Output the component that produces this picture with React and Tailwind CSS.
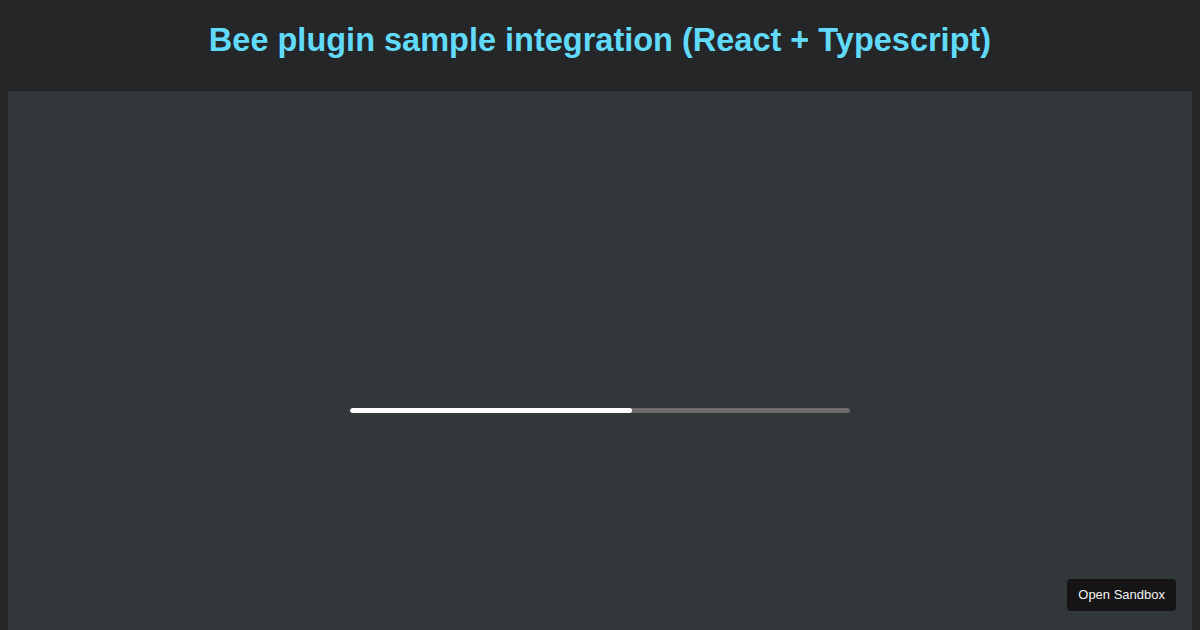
export default function App() {
  return (
    <div className="relative w-full h-[630px] overflow-hidden bg-[#252628] font-['Liberation_Sans',Arial,sans-serif]">
      <header className="h-[91px] pt-[21px] text-center">
        <h1 className="text-[32.5px] leading-[38px] font-bold text-[#61dafb]">
          Bee plugin sample integration (React + Typescript)
        </h1>
      </header>
      <main className="mx-2 h-[539px] bg-[#323739] pt-[317px] flex justify-center">
        <div className="w-[500px] h-[5px] rounded-full bg-[#6b6b6b] overflow-hidden">
          <div className="h-full w-[56.4%] rounded-full bg-white" />
        </div>
      </main>
      <button className="absolute right-[24px] bottom-[19px] h-[32px] px-[11px] rounded bg-[#151515] text-[13px] text-[#f2f2f2]">
        Open Sandbox
      </button>
    </div>
  );
}
